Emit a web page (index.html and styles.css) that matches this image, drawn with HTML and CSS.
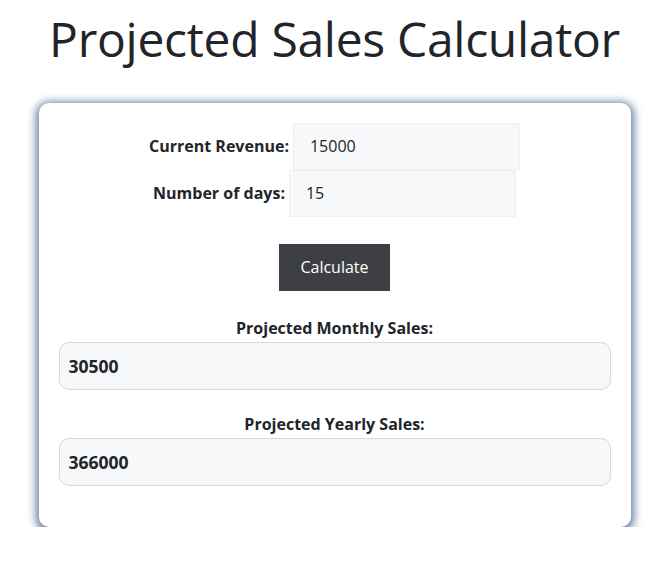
FILE: index.html
```html
<!DOCTYPE html>
<html lang="en">
<head>
    <meta charset="UTF-8">
    <meta name="viewport" content="width=device-width, initial-scale=1.0">
    <title>Projected Sales Calculator</title>
    <link rel="stylesheet" href="styles.css">
</head>
<body>

<h1 class="title">Projected Sales Calculator</h1>

<div class="card">
    <div class="field">
        <label for="revenue">Current Revenue:</label>
        <input type="text" id="revenue" class="entry" value="15000">
    </div>
    <div class="field">
        <label for="days">Number of days:</label>
        <input type="text" id="days" class="entry" value="15">
    </div>

    <div class="actions">
        <button type="button" class="btn_dark" id="calcButton">Calculate</button>
    </div>

    <div class="result">
        <div class="result_label">Projected Monthly Sales:</div>
        <div class="result_value" id="monthlyValue">30500</div>
    </div>

    <div class="result">
        <div class="result_label">Projected Yearly Sales:</div>
        <div class="result_value" id="yearlyValue">366000</div>
    </div>
</div>

<script>
    (function () {
        var revenueElement = document.getElementById("revenue");
        var daysElement = document.getElementById("days");
        var monthlyElement = document.getElementById("monthlyValue");
        var yearlyElement = document.getElementById("yearlyValue");

        function calculate() {
            var revenue = parseFloat(revenueElement.value) || 0;
            var days = parseFloat(daysElement.value) || 0;
            if (days <= 0) return;
            var perDay = revenue / days;
            monthlyElement.innerHTML = Math.round(perDay * 30.5);
            yearlyElement.innerHTML = Math.round(perDay * 366);
        }

        document.getElementById("calcButton").addEventListener("click", calculate);
    })();
</script>

</body>
</html>
```

FILE: styles.css
```css
body {
    margin: 0;
    background: #FFFFFF;
    color: #212529;
    font-family: "Open Sans", "Noto Sans", sans-serif;
    font-size: 16px;
}

.title {
    margin: 0;
    padding-top: 10px;
    text-align: center;
    font-size: 48px;
    font-weight: 400;
    line-height: 1.2;
    letter-spacing: -0.3px;
}

.card {
    width: 592px;
    box-sizing: border-box;
    margin: 35px auto 0;
    padding: 20px 20px 41px;
    background: #FFFFFF;
    border-radius: 10px;
    box-shadow: 0 2px 8px 3px rgba(75, 105, 145, 0.85);
}

.field {
    display: flex;
    justify-content: center;
    align-items: center;
    gap: 4px;
}

.field label {
    font-weight: 700;
}

.entry {
    width: 227px;
    height: 47px;
    box-sizing: border-box;
    padding: 0 16px;
    border: 1px solid #EEF0F2;
    background: #F7F8FA;
    font-family: inherit;
    font-size: 16px;
    color: #212529;
}

.actions {
    display: flex;
    justify-content: center;
    margin-top: 27px;
}

.btn_dark {
    width: 111px;
    height: 47px;
    border: none;
    background: #3E3F45;
    color: #FFFFFF;
    font-family: inherit;
    font-size: 16px;
}

.result {
    margin-top: 26px;
}

.result + .result {
    margin-top: 23px;
}

.result_label {
    text-align: center;
    font-weight: 700;
    margin-bottom: 3px;
}

.result_value {
    height: 48px;
    box-sizing: border-box;
    padding: 0 9px;
    display: flex;
    align-items: center;
    border: 1px solid #D6D8DB;
    border-radius: 10px;
    background: #F7F8FA;
    font-size: 17.5px;
    font-weight: 700;
}
```
